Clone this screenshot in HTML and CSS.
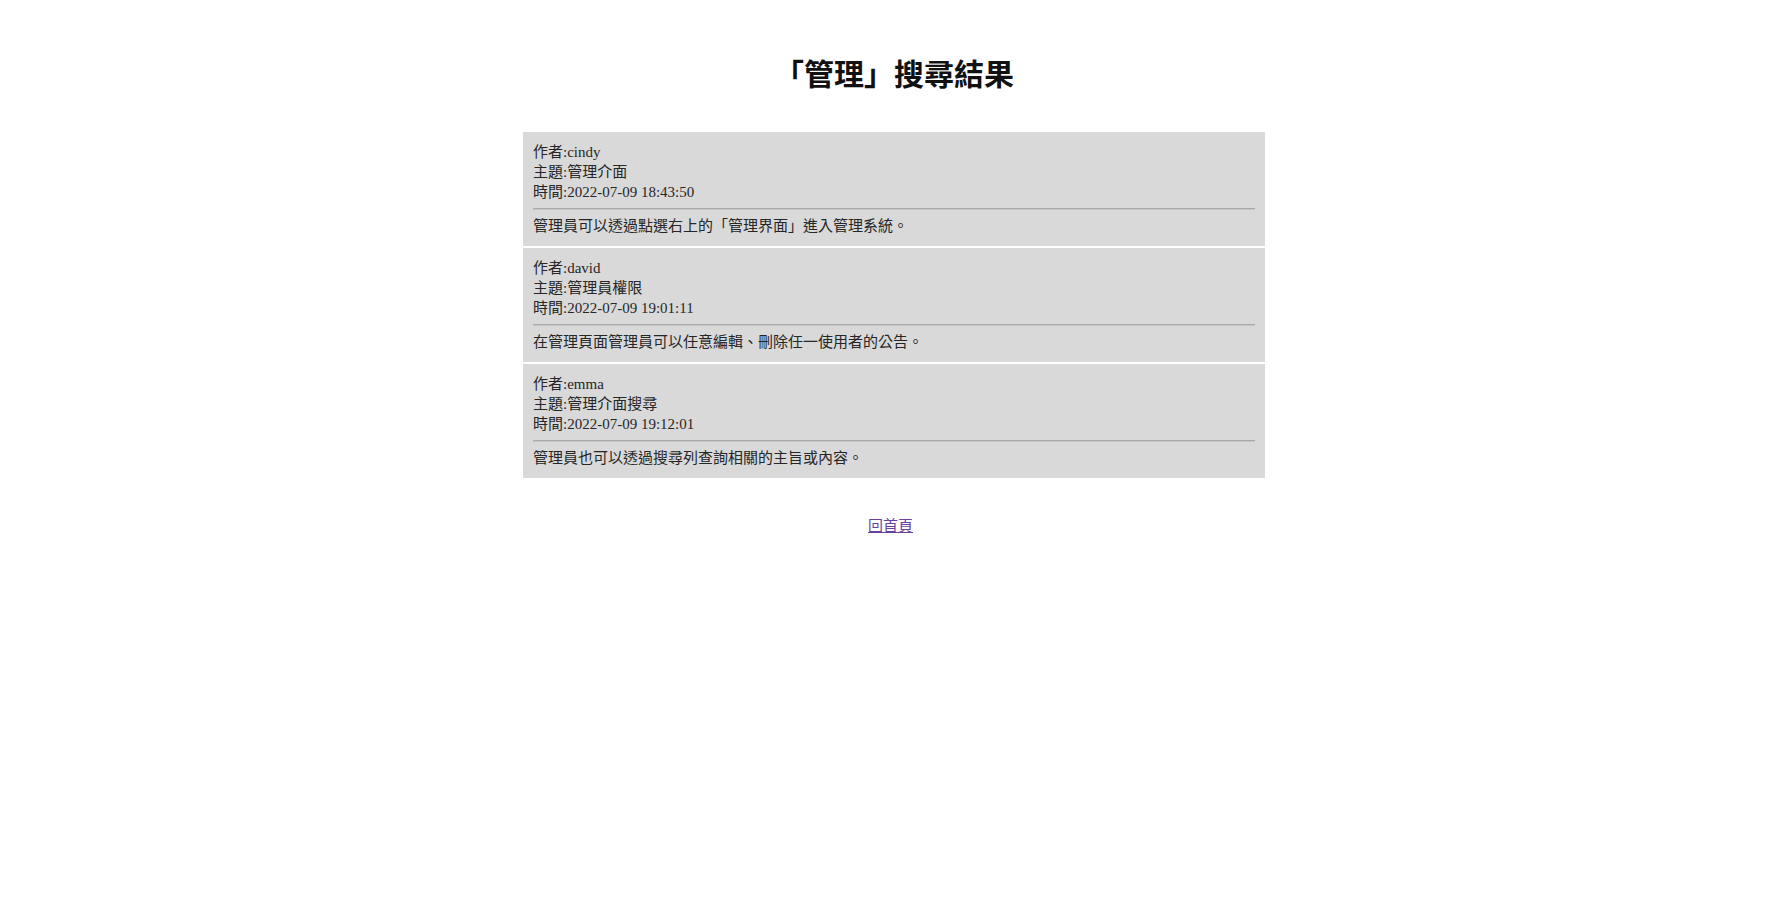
FILE: index.html
```html
<!DOCTYPE html>
<html lang="zh-Hant">
<head>
<meta charset="utf-8">
<title>搜尋結果</title>
<link rel="stylesheet" href="styles.css">
</head>
<body>
<main class="page">
  <h1 class="title">「管理」搜尋結果</h1>
  <section class="results">
    <article class="post">
      <div class="meta">作者:cindy</div>
      <div class="meta">主題:管理介面</div>
      <div class="meta">時間:2022-07-09 18:43:50</div>
      <hr class="divider">
      <div class="content">管理員可以透過點選右上的「管理界面」進入管理系統。</div>
    </article>
    <article class="post">
      <div class="meta">作者:david</div>
      <div class="meta">主題:管理員權限</div>
      <div class="meta">時間:2022-07-09 19:01:11</div>
      <hr class="divider">
      <div class="content">在管理頁面管理員可以任意編輯、刪除任一使用者的公告。</div>
    </article>
    <article class="post">
      <div class="meta">作者:emma</div>
      <div class="meta">主題:管理介面搜尋</div>
      <div class="meta">時間:2022-07-09 19:12:01</div>
      <hr class="divider">
      <div class="content">管理員也可以透過搜尋列查詢相關的主旨或內容。</div>
    </article>
  </section>
  <nav class="back">
    <a class="back-link" href="#">回首頁</a>
  </nav>
</main>
</body>
</html>
```

FILE: styles.css
```css
html, body {
  margin: 0;
  padding: 0;
  background: #ffffff;
}

body {
  font-family: "Liberation Serif", "Noto Sans CJK TC", serif;
  font-size: 15px;
  color: #262626;
  text-spacing-trim: space-all;
}

.page {
  display: flex;
  flex-direction: column;
  align-items: center;
  padding-top: 52px;
}

.title {
  margin: 0;
  font-family: "Noto Sans CJK TC", sans-serif;
  font-weight: 700;
  font-size: 30px;
  line-height: 40px;
  color: #111111;
  text-spacing-trim: space-all;
}

.results {
  width: 742px;
  margin-top: 40px;
  display: flex;
  flex-direction: column;
  gap: 2px;
}

.post {
  background: #d9d9d9;
  padding: 10px;
}

.meta,
.content {
  line-height: 20px;
  white-space: nowrap;
}

.divider {
  margin: 6px 0;
  height: 0;
  border: 0;
  border-top: 1px solid #a8a8a8;
  border-bottom: 1px solid #c6c6c6;
}

.back {
  margin-top: 38px;
  margin-right: 7px;
  line-height: 20px;
}

.back-link {
  color: #6b3fa0;
  text-decoration: underline;
}
```
